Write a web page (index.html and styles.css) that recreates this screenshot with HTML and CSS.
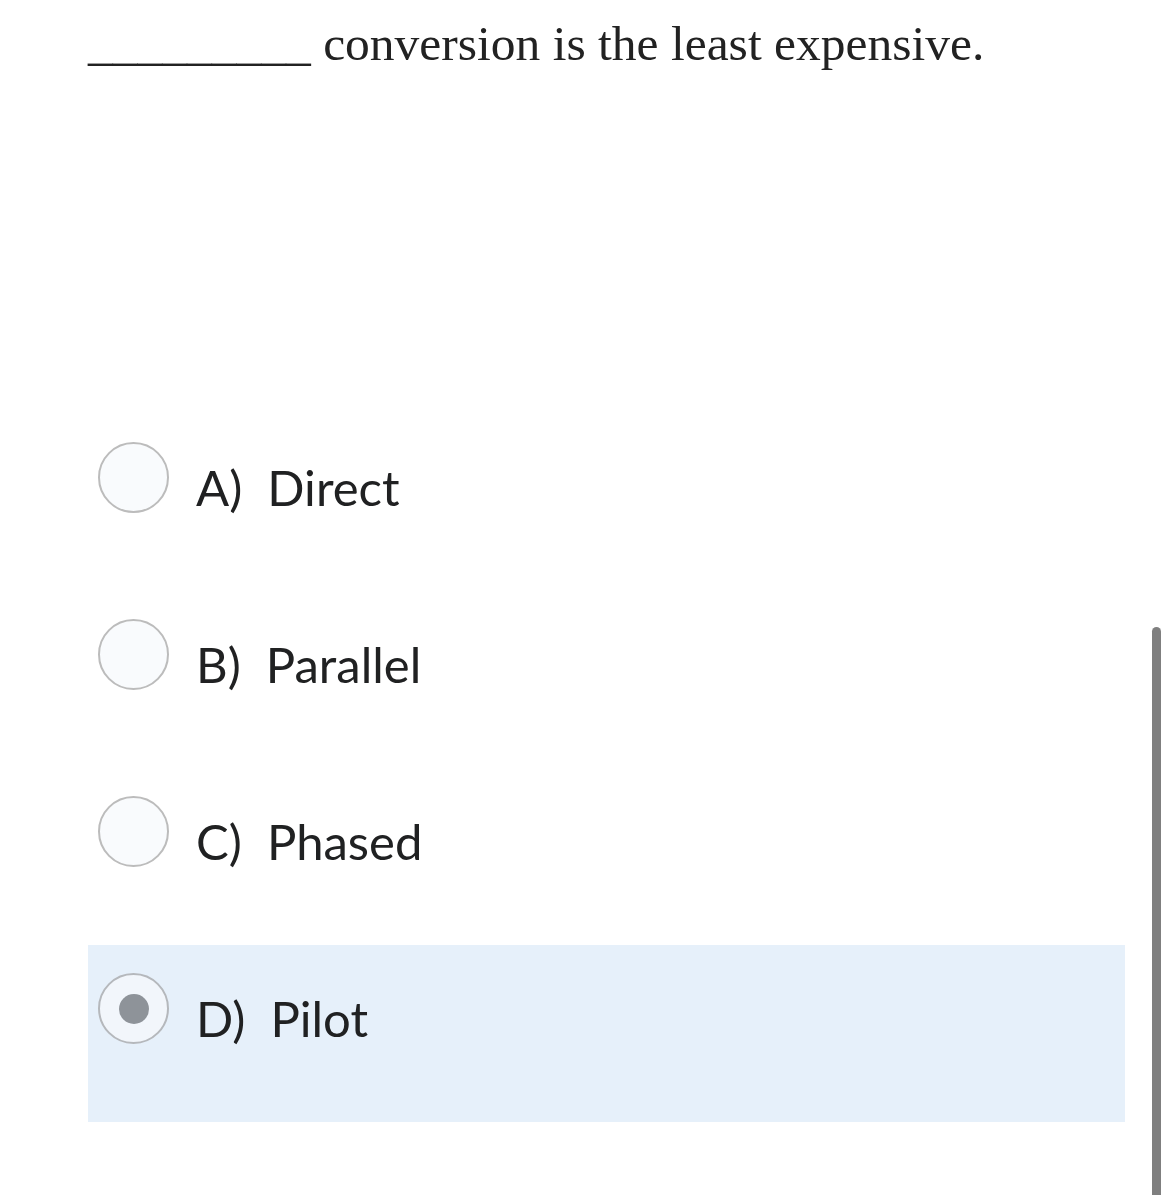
FILE: index.html
```html
<!DOCTYPE html>
<html lang="en">
<head>
<meta charset="utf-8">
<title>Question</title>
<link rel="stylesheet" href="styles.css">
</head>
<body>
<div class="page">
  <p class="question">_________ conversion is the least expensive.</p>
  <ul class="options">
    <li class="option"><span class="radio"></span><span class="label">A)&nbsp; Direct</span></li>
    <li class="option"><span class="radio"></span><span class="label">B)&nbsp; Parallel</span></li>
    <li class="option"><span class="radio"></span><span class="label">C)&nbsp; Phased</span></li>
    <li class="option selected"><span class="radio"><span class="dot"></span></span><span class="label">D)&nbsp; Pilot</span></li>
  </ul>
  <div class="scrollbar"></div>
</div>
</body>
</html>
```
FILE: styles.css
```css
html, body {
  margin: 0;
  padding: 0;
  background: #ffffff;
}
.page {
  position: relative;
  width: 1170px;
  height: 1195px;
  overflow: hidden;
}
.question {
  margin: 0;
  padding: 14px 0 0 88px;
  font-family: "Liberation Serif", "Times New Roman", serif;
  font-size: 49.5px;
  line-height: 60px;
  color: #222222;
}
.options {
  list-style: none;
  margin: 340px 0 0 88px;
  padding: 0;
  width: 1037px;
  display: flex;
  flex-direction: column;
}
.option {
  height: 177px;
  box-sizing: border-box;
  display: flex;
  align-items: flex-start;
  padding: 28px 0 0 10px;
  gap: 27px;
}
.option.selected {
  background: #e6f0fa;
}
.radio {
  width: 71px;
  height: 71px;
  box-sizing: border-box;
  border: 2px solid #bcbcbc;
  border-radius: 50%;
  background: #f9fbfd;
  display: flex;
  align-items: center;
  justify-content: center;
  flex: none;
}
.option.selected .radio {
  border-color: #b5b8bc;
  background: #f2f6fb;
}
.dot {
  width: 30px;
  height: 30px;
  border-radius: 50%;
  background: #8e9399;
}
.label {
  font-family: Lato, "Liberation Sans", sans-serif;
  font-size: 49px;
  line-height: 59px;
  margin-top: 16px;
  color: #202122;
}
.scrollbar {
  position: absolute;
  left: 1152px;
  top: 627px;
  width: 9px;
  height: 600px;
  border-radius: 5px;
  background: #7f7f7f;
}
```
